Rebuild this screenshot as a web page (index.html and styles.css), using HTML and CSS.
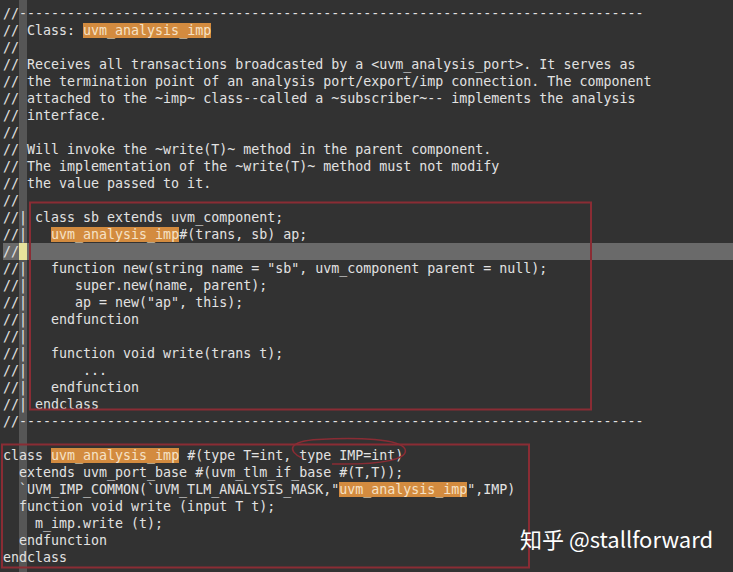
FILE: index.html
```html
<!DOCTYPE html>
<html>
<head>
<meta charset="utf-8">
<link rel="stylesheet" href="styles.css">
</head>
<body>
<div class="editor">
<div class="line">//------------------------------------------------------------------------------</div>
<div class="line">// Class: <span class="hl">uvm_analysis_imp</span></div>
<div class="line">//</div>
<div class="line">// Receives all transactions broadcasted by a &lt;uvm_analysis_port&gt;. It serves as</div>
<div class="line">// the termination point of an analysis port/export/imp connection. The component</div>
<div class="line">// attached to the ~imp~ class--called a ~subscriber~-- implements the analysis</div>
<div class="line">// interface.</div>
<div class="line">//</div>
<div class="line">// Will invoke the ~write(T)~ method in the parent component.</div>
<div class="line">// The implementation of the ~write(T)~ method must not modify</div>
<div class="line">// the value passed to it.</div>
<div class="line">//</div>
<div class="line">//| class sb extends uvm_component;</div>
<div class="line">//|   <span class="hl">uvm_analysis_imp</span>#(trans, sb) ap;</div>
<div class="line cursorline">//<span class="cursor">|</span></div>
<div class="line">//|   function new(string name = "sb", uvm_component parent = null);</div>
<div class="line">//|      super.new(name, parent);</div>
<div class="line">//|      ap = new("ap", this);</div>
<div class="line">//|   endfunction</div>
<div class="line">//|</div>
<div class="line">//|   function void write(trans t);</div>
<div class="line">//|       ...</div>
<div class="line">//|   endfunction</div>
<div class="line">//| endclass</div>
<div class="line">//------------------------------------------------------------------------------</div>
<div class="line"></div>
<div class="line">class <span class="hl">uvm_analysis_imp</span> #(type T=int, type IMP=int)</div>
<div class="line">  extends uvm_port_base #(uvm_tlm_if_base #(T,T));</div>
<div class="line">  `UVM_IMP_COMMON(`UVM_TLM_ANALYSIS_MASK,"<span class="hl">uvm_analysis_imp</span>",IMP)</div>
<div class="line">  function void write (input T t);</div>
<div class="line">    m_imp.write (t);</div>
<div class="line">  endfunction</div>
<div class="line">endclass</div>
</div>
<svg class="marks" width="733" height="572" viewBox="0 0 733 572">
  <rect x="30" y="202.5" width="561" height="207" fill="none" stroke="#8a2c34" stroke-width="2"/>
  <rect x="2" y="444.5" width="527" height="123" fill="none" stroke="#8a2c34" stroke-width="2"/>
  <path d="M302 458 C287 451 288 441 318 439.5 C358 437 400 439 405 449 C409 459 384 465 332 464" fill="none" stroke="#8a2c34" stroke-width="1.5"/>
</svg>
<div class="watermark">知乎 @stallforward</div>
</body>
</html>
```

FILE: styles.css
```css
html, body {
  margin: 0;
  padding: 0;
  background: #323232;
}
body {
  width: 733px;
  height: 572px;
  overflow: hidden;
  position: relative;
}
.editor {
  padding-top: 5px;
  padding-left: 3px;
  font-family: "DejaVu Sans Mono", monospace;
  font-size: 13.3px;
  color: #e2e2e2;
  background: linear-gradient(to right, transparent 19px, #565656 19px, #565656 27px, transparent 27px);
  height: 567px;
}
.line {
  height: 17px;
  line-height: 17px;
  white-space: pre;
}
.hl {
  background: #d38b3f;
  color: #f6e2c6;
}
.cursorline {
  background: #6a6a6a;
}
.cursor {
  display: inline-block;
  width: 8px;
  background: #e7e39c;
  color: #e7e39c;
}
.marks {
  position: absolute;
  left: 0;
  top: 0;
}
.watermark {
  position: absolute;
  left: 520px;
  top: 523px;
  font-family: "Noto Sans CJK SC", "Noto Sans", sans-serif;
  font-size: 22px;
  color: #ffffff;
  line-height: 30px;
  white-space: nowrap;
}
```
